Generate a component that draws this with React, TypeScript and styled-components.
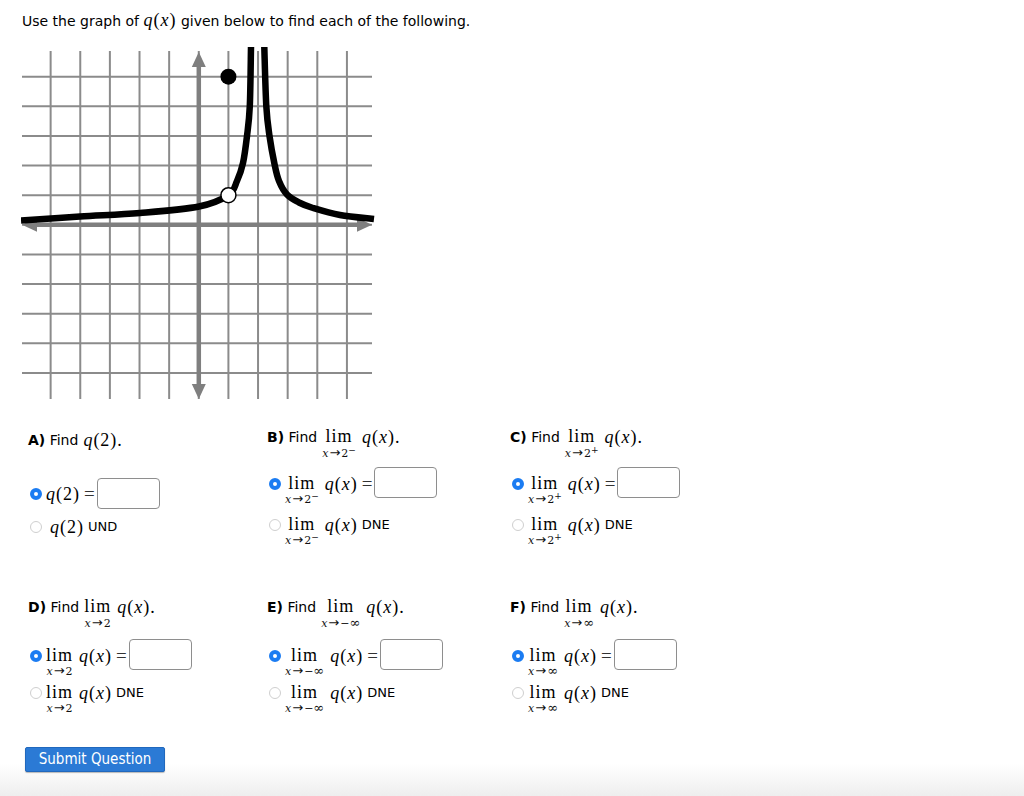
import React from "react";
import styled, { createGlobalStyle, css } from "styled-components";

const GlobalStyle = createGlobalStyle`
  html, body {
    margin: 0;
    padding: 0;
    background: #fff;
  }
  body {
    font-family: "DejaVu Sans", Verdana, sans-serif;
    color: #000;
  }
`;

const Page = styled.div`
  min-height: 796px;
  box-sizing: border-box;
  padding: 10px 0 0 22px;
  background: linear-gradient(to bottom, #fff 0, #fff 764px, #eeeeee 796px);
`;

const Title = styled.div`
  font-size: 14px;
  line-height: 20px;
  white-space: pre;
`;

const GraphBox = styled.svg`
  display: block;
  margin: 16px 0 0 -1px;
`;

const Questions = styled.div`
  display: grid;
  grid-template-columns: 239px 243px 1fr;
  grid-template-rows: 170px 150px;
  margin-top: 24px;
  padding-left: 6px;
`;

const Question = styled.div<{ $rows: string; $pad?: number }>`
  display: grid;
  grid-template-rows: ${(p) => p.$rows};
  align-content: start;
  padding-top: ${(p) => p.$pad ?? 0}px;
`;

const Row = styled.div`
  display: flex;
  align-items: flex-start;
`;

const Label = styled.span`
  font-size: 14px;
  line-height: 20px;
  margin-right: 5px;
  white-space: pre;
  b {
    font-weight: bold;
  }
`;

const MathText = styled.span<{ $gap?: number }>`
  font-family: "Liberation Serif", "Times New Roman", serif;
  font-size: 18px;
  line-height: 20px;
  letter-spacing: 1px;
  white-space: pre;
  margin-left: ${(p) => p.$gap ?? 0}px;
  i {
    font-style: italic;
  }
`;

const Lim = styled.span`
  display: inline-flex;
  flex-direction: column;
  align-items: center;
  flex: none;
`;

const LimWord = styled.span`
  font-family: "Liberation Serif", "Times New Roman", serif;
  font-size: 18px;
  line-height: 19px;
  letter-spacing: 1px;
`;

const LimSub = styled.span<{ $drop: number }>`
  font-family: "DejaVu Serif", "Liberation Serif", serif;
  font-size: 11px;
  line-height: 11px;
  margin-top: ${(p) => p.$drop}px;
  white-space: pre;
  color: #111;
  i {
    font-style: italic;
  }
  sup {
    font-size: 9px;
    line-height: 0;
    vertical-align: 4px;
  }
`;

const Arrow = styled.span`
  font-family: "DejaVu Sans", sans-serif;
  font-size: 13px;
  margin: 0 1px;
`;

const Inf = styled.span`
  font-family: "DejaVu Serif", serif;
  font-size: 13px;
  line-height: 11px;
`;

const Word = styled.span`
  font-size: 13px;
  line-height: 20px;
  margin-left: 4px;
`;

const Radio = styled.span<{ $checked?: boolean; $gap?: number }>`
  flex: none;
  box-sizing: border-box;
  width: 12px;
  height: 12px;
  border-radius: 50%;
  margin: 4px ${(p) => p.$gap ?? 4}px 0 2px;
  background: #fff;
  ${(p) =>
    p.$checked
      ? css`
          border: 4px solid #1b7cf2;
        `
      : css`
          border: 1px solid #cfcfcf;
        `}
`;

const Equals = styled.span`
  font-family: "Liberation Serif", "Times New Roman", serif;
  font-size: 19px;
  line-height: 20px;
  margin: 0 2px 0 4px;
  color: #333;
`;

const AnswerBox = styled.span<{ $lift: number }>`
  flex: none;
  box-sizing: border-box;
  width: 63px;
  height: 31px;
  margin-top: ${(p) => -p.$lift}px;
  border: 1px solid #8e8e8e;
  border-radius: 4px;
  background: #fff;
`;

const SubmitButton = styled.button`
  display: block;
  margin: 0 0 0 3px;
  width: 140px;
  height: 25px;
  padding: 0;
  border: 1px solid #2168bd;
  border-radius: 2px;
  box-shadow: 0 1px 1px #b9b9b9;
  background: #2b7ad5;
  color: #fff;
  font-family: "Liberation Sans Narrow", "DejaVu Sans Condensed", sans-serif;
  font-size: 15px;
  line-height: 23px;
`;

/* ---- graph ---- */

const U = 29.63;
const O = 177.8;
const sx = (x: number) => O + x * U;
const sy = (y: number) => O - y * U;

// traced points of the curve, in page pixels
const leftPts: [number, number][] = [
  [21, 219.5],
  [80, 215.5],
  [140, 212],
  [199, 205.5],
  [228.5, 194],
  [237, 180],
  [243, 162],
  [247, 135],
  [249.8, 105],
  [251, 46],
];
const rightPts: [number, number][] = [
  [264.3, 46],
  [266.3, 105],
  [269.5, 135],
  [274.5, 163],
  [279, 180],
  [287, 193.5],
  [299, 201.5],
  [313, 207],
  [340, 214],
  [374, 218],
];

function smooth(page: [number, number][]) {
  const p = page.map(([x, y]) => [x - 21, y - 46]);
  let d = `M${p[0][0]},${p[0][1]}`;
  for (let i = 0; i < p.length - 1; i++) {
    const p0 = p[i - 1] || p[i];
    const p1 = p[i];
    const p2 = p[i + 1];
    const p3 = p[i + 2] || p2;
    const c1 = [p1[0] + (p2[0] - p0[0]) / 6, p1[1] + (p2[1] - p0[1]) / 6];
    const c2 = [p2[0] - (p3[0] - p1[0]) / 6, p2[1] - (p3[1] - p1[1]) / 6];
    d += ` C${c1[0].toFixed(2)},${c1[1].toFixed(2)} ${c2[0].toFixed(2)},${c2[1].toFixed(2)} ${p2[0]},${p2[1]}`;
  }
  return d;
}

const Graph = () => {
  const lines = Array.from({ length: 11 }, (_, i) => (i + 1) * U);
  return (
    <GraphBox width={356} height={356} viewBox="0 0 356 356">
      <g stroke="#8b8b8b" strokeWidth={2}>
        {lines.map((v) => (
          <line key={"v" + v} x1={v} y1={4} x2={v} y2={352} />
        ))}
        {lines.map((v) => (
          <line key={"h" + v} x1={1} y1={v} x2={351} y2={v} />
        ))}
      </g>
      <g stroke="#7f7f7f" strokeWidth={4.5}>
        <line x1={O} y1={14} x2={O} y2={342} />
        <line x1={10} y1={O} x2={342} y2={O} />
      </g>
      <g fill="#7f7f7f">
        <polygon points={`${O},5 ${O - 7},20 ${O + 7},20`} />
        <polygon points={`${O},352 ${O - 7},337 ${O + 7},337`} />
        <polygon points={`1,${O} 16,${O - 7} 16,${O + 7}`} />
        <polygon points={`351,${O} 336,${O - 7} 336,${O + 7}`} />
      </g>
      <g fill="none" stroke="#000" strokeWidth={6.5}>
        <path d={smooth(leftPts)} />
        <path d={smooth(rightPts)} />
      </g>
      <circle cx={sx(1)} cy={sy(1)} r={7.5} fill="#fff" stroke="#000" strokeWidth={1.5} />
      <circle cx={sx(1)} cy={sy(5)} r={8} fill="#000" />
    </GraphBox>
  );
};

/* ---- math bits ---- */

const Qx = () => (
  <>
    <i>q</i>(<i>x</i>)
  </>
);

const LimQ = ({ sub, drop = 0, tail = "" }: { sub: React.ReactNode; drop?: number; tail?: string }) => (
  <>
    <Lim>
      <LimWord>lim</LimWord>
      <LimSub $drop={drop}>{sub}</LimSub>
    </Lim>
    <MathText $gap={6}>
      <Qx />
      {tail}
    </MathText>
  </>
);

const To = ({ children }: { children: React.ReactNode }) => (
  <>
    <i>x</i>
    <Arrow>→</Arrow>
    {children}
  </>
);

const subTo2m = (
  <To>
    2<sup>−</sup>
  </To>
);
const subTo2p = (
  <To>
    2<sup>+</sup>
  </To>
);
const subTo2 = <To>2</To>;
const subToMinusInf = (
  <To>
    −<Inf>∞</Inf>
  </To>
);
const subToInf = (
  <To>
    <Inf>∞</Inf>
  </To>
);

const LimQuestion = ({
  letter,
  sub,
  rows,
}: {
  letter: string;
  sub: React.ReactNode;
  rows: string;
}) => (
  <Question $rows={rows}>
    <Row>
      <Label>
        <b>{letter})</b> Find
      </Label>
      <LimQ sub={sub} drop={1} tail="." />
    </Row>
    <Row>
      <Radio $checked />
      <LimQ sub={sub} drop={0} />
      <Equals>=</Equals>
      <AnswerBox $lift={7} />
    </Row>
    <Row>
      <Radio />
      <LimQ sub={sub} drop={0} />
      <Word>DNE</Word>
    </Row>
  </Question>
);

export default function App() {
  return (
    <Page>
      <GlobalStyle />
      <Title>
        Use the graph of{" "}
        <MathText>
          <i>q</i>(<i>x</i>)
        </MathText>{" "}
        given below to find each of the following.
      </Title>
      <Graph />
      <Questions>
        <Question $rows="54px 33px auto" $pad={3}>
          <Row>
            <Label>
              <b>A)</b> Find
            </Label>
            <MathText>
              <i>q</i>(2).
            </MathText>
          </Row>
          <Row>
            <Radio $checked />
            <MathText>
              <i>q</i>(2)
            </MathText>
            <Equals>=</Equals>
            <AnswerBox $lift={6} />
          </Row>
          <Row>
            <Radio $gap={8} />
            <MathText>
              <i>q</i>(2)
            </MathText>
            <Word>UND</Word>
          </Row>
        </Question>
        <LimQuestion letter="B" sub={subTo2m} rows="47px 41px auto" />
        <LimQuestion letter="C" sub={subTo2p} rows="47px 41px auto" />
        <LimQuestion letter="D" sub={subTo2} rows="49px 37px auto" />
        <LimQuestion letter="E" sub={subToMinusInf} rows="49px 37px auto" />
        <LimQuestion letter="F" sub={subToInf} rows="49px 37px auto" />
      </Questions>
      <SubmitButton>Submit Question</SubmitButton>
    </Page>
  );
}
